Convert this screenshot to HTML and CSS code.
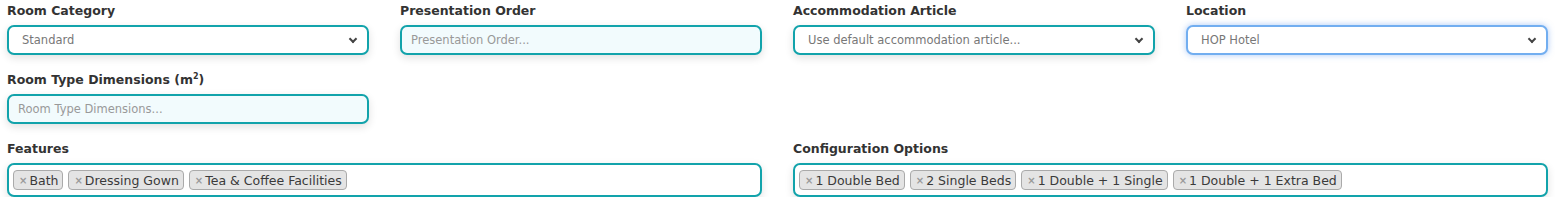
FILE: index.html
```html
<!DOCTYPE html>
<html lang="en">
<head>
  <meta charset="UTF-8" />
  <title>Room Type</title>
  <link rel="stylesheet" href="styles.css">
</head>
<body>
  <form class="room-form">
    <div class="field">
      <label>Room Category</label>
      <div class="control select">Standard<span class="caret"></span></div>
    </div>
    <div class="field">
      <label>Presentation Order</label>
      <div class="control input">Presentation Order...</div>
    </div>
    <div class="field">
      <label>Accommodation Article</label>
      <div class="control select">Use default accommodation article...<span class="caret"></span></div>
    </div>
    <div class="field">
      <label>Location</label>
      <div class="control select focused">HOP Hotel<span class="caret"></span></div>
    </div>

    <div class="field">
      <label>Room Type Dimensions (m<sup>2</sup>)</label>
      <div class="control input">Room Type Dimensions...</div>
    </div>
    <div class="field"></div>
    <div class="field"></div>
    <div class="field"></div>

    <div class="field wide">
      <label>Features</label>
      <div class="control tags">
        <span class="tag"><i>×</i>Bath</span>
        <span class="tag"><i>×</i>Dressing Gown</span>
        <span class="tag"><i>×</i>Tea &amp; Coffee Facilities</span>
      </div>
    </div>
    <div class="field wide">
      <label>Configuration Options</label>
      <div class="control tags">
        <span class="tag"><i>×</i>1 Double Bed</span>
        <span class="tag"><i>×</i>2 Single Beds</span>
        <span class="tag"><i>×</i>1 Double + 1 Single</span>
        <span class="tag"><i>×</i>1 Double + 1 Extra Bed</span>
      </div>
    </div>
  </form>
</body>
</html>
```
FILE: styles.css
```css
body {
  margin: 0;
  background: #fff;
  font-family: "DejaVu Sans", sans-serif;
  color: #333;
}
.room-form {
  display: grid;
  grid-template-columns: repeat(4, 362px);
  column-gap: 31px;
  row-gap: 16px;
  padding: 2px 7px 0;
}
.field {
  display: flex;
  flex-direction: column;
}
.field.wide {
  grid-column: span 2;
}
label {
  font-size: 12.5px;
  font-weight: bold;
  line-height: 18px;
  margin-bottom: 5px;
  color: #333;
}
label sup {
  font-size: 8px;
  line-height: 0;
}
.control {
  box-sizing: border-box;
  height: 30px;
  border: 2px solid #12a3ab;
  border-radius: 7px;
  box-shadow: 0 3px 8px rgba(0, 0, 0, 0.12);
  font-size: 11.5px;
  display: flex;
  align-items: center;
  padding: 0 9px;
  background: #fff;
}
.select {
  color: #777;
  justify-content: space-between;
  padding-left: 13px;
}
.select.focused {
  border-color: #72aef0;
  box-shadow: 0 0 6px rgba(90, 150, 240, 0.5);
}
.caret {
  width: 4px;
  height: 4px;
  border-right: 2px solid #444;
  border-bottom: 2px solid #444;
  transform: rotate(45deg);
  margin: -3px 2px 0 0;
}
.input {
  background: #f2fbfd;
  color: #999;
}
.tags {
  height: 34px;
  padding: 0 4px;
  gap: 5px;
}
.tag {
  display: inline-flex;
  align-items: center;
  height: 20px;
  box-sizing: border-box;
  padding: 0 4px 0 5px;
  background: #e4e4e4;
  border: 1px solid #aaa;
  border-radius: 4px;
  font-size: 12.5px;
  color: #3a3a3a;
}
.tag i {
  font-style: normal;
  font-weight: bold;
  color: #999;
  font-size: 10px;
  margin-right: 2px;
}
```
